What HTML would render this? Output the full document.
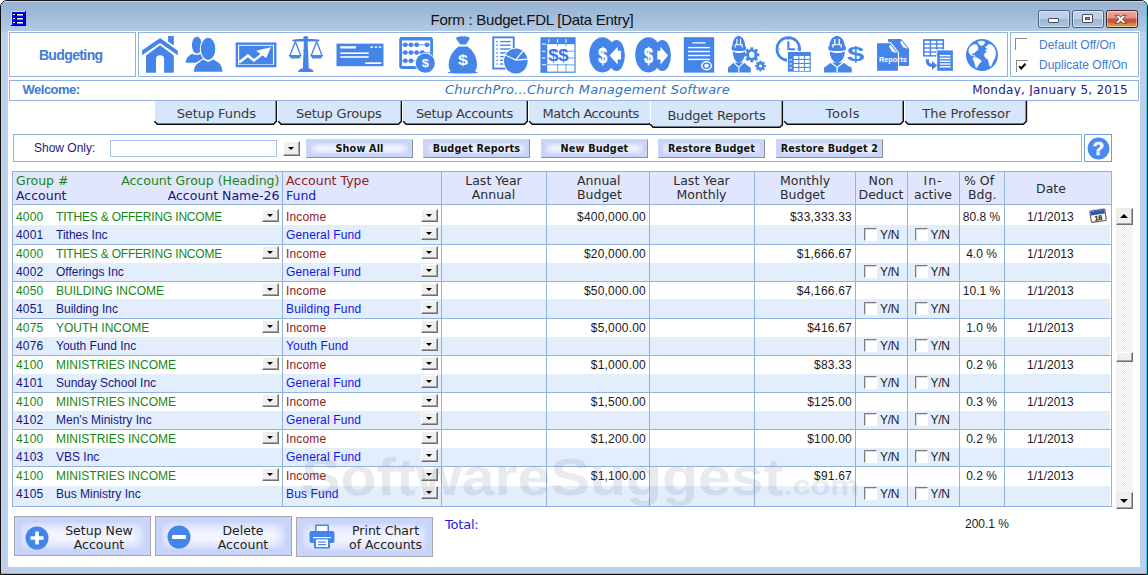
<!DOCTYPE html>
<html lang="en"><head><meta charset="utf-8"><title>Form : Budget.FDL [Data Entry]</title>
<style>
html,body{margin:0;padding:0;background:#fff}
body{width:1148px;height:575px;overflow:hidden;position:relative;font-family:"Liberation Sans",sans-serif;font-size:12px}
.abs{position:absolute}
#win{position:absolute;left:0;top:0;width:1146px;height:573px;border:1px solid #111;border-radius:7px 7px 0 0;background:#bcd0ea;box-shadow:inset -1px -1px 0 #35d6f6;overflow:hidden}
#tbar{position:absolute;left:0;top:0;width:1146px;height:31px;background:linear-gradient(#98b2d3,#9fb9d8 40%,#b3cce6)}
#hl{position:absolute;left:0;top:0;width:1146px;height:1px;background:#c9dbef}
#cy{position:absolute;right:0;top:5px;width:1px;bottom:0;background:#38d4f4}
#title{position:absolute;left:330px;top:10px;width:402px;text-align:center;font-size:15px;letter-spacing:-0.25px;color:#111;white-space:nowrap;line-height:18px}
.wb{position:absolute;top:9px;width:32px;height:18px;box-sizing:border-box;border:1px solid #4d5f7e;border-radius:2.5px;background:linear-gradient(#bfd3ea 0,#bad0e8 48%,#9db8d6 52%,#a9c3e0);box-shadow:inset 0 0 0 1px rgba(255,255,255,.45)}
.wb i{position:absolute;box-sizing:border-box;background:#fff;border:1px solid #4b4b63;border-radius:1px}
.wb b{position:absolute;box-sizing:border-box;background:#8fa9c9;border:1px solid #4b4b63}
.wb.cl{border-color:#4b1d24;background:linear-gradient(#e9a99c 0,#dc9388 45%,#c9503b 50%,#cf5a3e 72%,#c98743 78%,#d29a4c)}
.wb svg{position:absolute;left:-1px;top:-1px}
#content{position:absolute;left:7px;top:30px;width:1132px;height:536px;background:#fff}
#content>*{margin-left:-8px;margin-top:-31px}
.box{position:absolute;box-sizing:border-box;border:1px solid #93b2de;background:#fff}
#budg{position:absolute;left:-1.3px;top:13.7px;width:124px;text-align:center;font-weight:bold;font-size:14px;letter-spacing:-0.62px;color:#427bd2;line-height:16px}
.cb0{position:absolute;width:11px;height:11px;border-left:1px solid #8a8a8a;border-top:1px solid #8a8a8a;background:#fff}
.cb0 svg{position:absolute;left:0;top:0}
.cbt{position:absolute;font-size:12px;line-height:14px;color:#427bd2;white-space:nowrap}
#welc{position:absolute;left:12.5px;top:2px;font-weight:bold;font-size:13px;letter-spacing:-0.5px;line-height:14px;color:#427bd2}
#slogan{position:absolute;left:435px;top:0;letter-spacing:0.19px;font:italic 13px/17px "DejaVu Sans",sans-serif;color:#2f75c5;white-space:nowrap}
#date{position:absolute;right:10px;top:0;height:15px;overflow:hidden;letter-spacing:0.25px;font:12px/18px "DejaVu Sans",sans-serif;color:#1b1b8a;white-space:nowrap}
.tabt{font-family:"DejaVu Sans",sans-serif;font-size:13px;fill:#3a3a3a}
#showonly{position:absolute;left:34px;top:140.7px;font-size:12px;line-height:14px;color:#1b1b7a;white-space:nowrap}
#sinput{position:absolute;left:110px;top:140px;width:165px;height:15px;border:1px solid #a9c4e9;background:#fff}
.dd{position:absolute;box-sizing:border-box;background:#efefef;border:1px solid;border-color:#fff #6e6e6e #6e6e6e #fff;box-shadow:1px 1px 0 #a0a0a0 inset;box-shadow:inset -1px -1px 0 #a5a5a5}
.dd s{position:absolute;left:50%;top:50%;margin:-1.5px 0 0 -3.2px;width:0;height:0;border:3px solid transparent;border-bottom-width:0;border-top-color:#000}
.btn{position:absolute;box-sizing:border-box;border:1px solid;border-color:#cad5fb #8e8e96 #8e8e96 #cad5fb;background:linear-gradient(#c9d4fb 0,#c9d4fb 14%,#dbe2fd 22%,#f4f6ff 50%,#dbe2fd 78%,#c9d4fb 86%,#c9d4fb 100%);text-align:center}
.btn:before{content:"";position:absolute;left:0;top:0;right:0;bottom:0;background:linear-gradient(90deg,#c9d4fb 0,#c9d4fb 3px,rgba(201,212,251,0.55) 5px,rgba(201,212,251,0) 12px,rgba(201,212,251,0) calc(100% - 12px),rgba(201,212,251,0.55) calc(100% - 5px),#c9d4fb calc(100% - 3px),#c9d4fb 100%)}
.btn span{position:relative;top:0.4px;letter-spacing:0.14px;font:bold 9.7px/17px "DejaVu Sans",sans-serif;color:#111;white-space:nowrap}
#tbl{position:absolute;left:12px;top:171px;width:1100px;height:336px;box-sizing:border-box;border:1px solid #93b2de;background:#fff;overflow:hidden}
#tbl>*{margin-left:-1px;margin-top:-1px}
#thead{position:absolute;left:0;top:0;width:1100px;height:34px;box-sizing:border-box;background:#e0e6fc;border-bottom:1px solid #93b2de}
.vl{position:absolute;top:0;width:1px;height:336px;background:#93b2de;z-index:2}
.hl{position:absolute;left:0;width:1100px;height:1px;background:#93b2de}
.rw{position:absolute;left:1px;width:1097px;background:#fff}
.rb{position:absolute;left:1px;width:1097px;background:#e3eefd}
.h{position:absolute;font:12.5px/14px "DejaVu Sans",sans-serif;white-space:nowrap;letter-spacing:0}
.d{position:absolute;font-size:12px;line-height:14px;white-space:nowrap}
.c{text-align:center}
.u{letter-spacing:-0.19px}.l{letter-spacing:0.15px}
.g{color:#168716}.n{color:#161682}.r{color:#8c2222}.b{color:#1414e4}.k{color:#1a1a1a}
.h.k{color:#2b2b2b}
.ck{position:absolute;width:11px;height:11px;background:#fff;border:1px solid;border-color:#7c7c7c #fff #fff #7c7c7c;box-shadow:inset 1px 1px 0 #d8d8d8}
.yn{letter-spacing:-0.3px}.ra{letter-spacing:0.2px}.nm{letter-spacing:0.2px}
#wm{position:absolute;left:288.5px;top:277px;font:bold 51px/60px "Liberation Sans",sans-serif;color:rgba(95,105,135,0.14);white-space:nowrap;transform:scaleX(1.158);transform-origin:0 0;pointer-events:none;z-index:3}
#wm span{font-size:28px}
#strack{position:absolute;left:1116px;top:208px;width:17px;height:301px;background:#f4f4f4;background-image:repeating-conic-gradient(#e9e9e9 0 25%,#fff 0 50%);background-size:2px 2px}
.sb{position:absolute;left:1116px;width:17px;box-sizing:border-box;background:#efefef;border:1px solid;border-color:#e9e9e9 #6e6e6e #6e6e6e #e9e9e9;box-shadow:inset -1px -1px 0 #a5a5a5}
.sb s{position:absolute;left:50%;top:50%;margin:-2px 0 0 -5px;width:0;height:0;border:4px solid transparent;border-bottom-width:0;border-top-color:#000}
.sb s.up{border-top-width:0;border-bottom-width:4px;border-bottom-color:#000;border-top-color:transparent;margin-top:-3px}
.bbtn{position:absolute;box-sizing:border-box;border:1px solid #a6a6ae;background:linear-gradient(#c9d4fb 0,#c9d4fb 12%,#dbe2fd 20%,#f2f4ff 42%,#f2f4ff 58%,#dbe2fd 80%,#c9d4fb 88%,#c9d4fb 100%)}
.bbtn:before{content:"";position:absolute;left:0;top:0;right:0;bottom:0;background:linear-gradient(90deg,#c9d4fb 0,#c9d4fb 5px,rgba(201,212,251,0.55) 8px,rgba(201,212,251,0) 18px,rgba(201,212,251,0) calc(100% - 18px),rgba(201,212,251,0.55) calc(100% - 8px),#c9d4fb calc(100% - 5px),#c9d4fb 100%)}
.bt{position:absolute;top:7px;width:100px;text-align:center;font:12.5px/14px "DejaVu Sans",sans-serif;color:#222;white-space:nowrap}
#total{position:absolute;left:445px;top:516.5px;font:13px/16px "DejaVu Sans",sans-serif;color:#1a1ae0;letter-spacing:-0.2px}
#tot2{position:absolute;left:965px;top:517px;font-size:12px;line-height:15px;color:#1a1a1a}

</style></head>
<body>
<div id="win"><div id="tbar"></div><div id="hl"></div><div id="cy"></div>
<svg class="abs" style="left:10px;top:10px" width="15" height="15" viewBox="0 0 15 15"><rect x="0" y="0" width="14" height="14" fill="#00f"/><path d="M0.5 14V0.5H14" fill="none" stroke="#e8e4c0" stroke-width="1"/><path d="M14.5 0V14.5H0" fill="none" stroke="#000" stroke-width="1"/><g fill="#000"><rect x="5" y="2" width="8" height="3"/><rect x="5" y="6" width="8" height="3"/><rect x="5" y="10" width="8" height="3"/></g><g fill="#fffbe0"><rect x="6" y="3" width="6" height="1.6"/><rect x="6" y="7" width="6" height="1.6"/><rect x="6" y="11" width="6" height="1.6"/><rect x="2" y="3" width="2" height="1"/><rect x="2" y="7" width="2" height="1"/><rect x="2" y="11" width="2" height="1"/></g></svg>
<div id="title">Form : Budget.FDL [Data Entry]</div>
<div class="wb" style="left:1037px"><i style="left:9px;top:7px;width:11px;height:5px"></i></div><div class="wb" style="left:1071px"><i style="left:9px;top:3px;width:11px;height:9px"></i><b style="left:12px;top:6px;width:5px;height:3px"></b></div><div class="wb cl" style="left:1105px"><svg width="31" height="18" viewBox="1 -1 31 18"><path d="M10.2 4.3h3.7l1.8 2.1 1.8-2.1h3.7l-3.6 3.9 3.8 4.1h-3.7l-2-2.3-2 2.3h-3.7l3.8-4.1z" fill="#fff" stroke="#5a2a2a" stroke-width="0.8"/></svg></div>
<div id="content">
<div class="box" style="left:9px;top:32px;width:127px;height:45px"><div id="budg">Budgeting</div></div>
<div class="box" style="left:138px;top:32px;width:870px;height:45px"></div>
<div class="box" style="left:1010px;top:32px;width:129px;height:45px"></div>
<svg class="abs" style="left:8px;top:31px" width="1132" height="48" viewBox="8 31 1132 48" font-family="Liberation Sans, sans-serif">
<g fill="#4585ea" stroke="none">
<!-- 1 house -->
<path d="M142 50.4L160.04 38L177.8 50.8V55.3L160.04 42.9L142 55.3Z"/>
<path d="M168.05 36H173.8V45.5L168.05 41.4Z"/>
<path d="M146 55.4L160.04 45.3L173.8 55.4V72.7H164.1V59.4a4.05 4.05 0 0 0-8.1 0V72.7H146Z"/>
<!-- 2 people -->
<ellipse cx="196.9" cy="45.2" rx="5" ry="8.4"/>
<path d="M185.7 62.85C186.1 58.4 187.7 56 192.5 53.8C194.1 55.3 198.9 55.3 201.3 53.6L203.7 58.4L195.7 62.85Z"/>
<ellipse cx="208.1" cy="48.9" rx="8.3" ry="12.2" fill="#fff"/>
<path d="M192.7 72.6C193.1 67 194.4 64.6 197.4 62.3L202.9 58.3L208.1 60.4L213.3 58.3L219.2 61.9C222 64 223.2 67 223.6 72.6Z" fill="#fff"/>
<ellipse cx="208.1" cy="48.9" rx="7.2" ry="11.1"/>
<path d="M193.85 71.7C194.2 67.2 195.4 65.2 198 63.2L202.9 59.6L208.1 62L213.3 59.6L218.6 62.8C220.9 64.6 222 67.2 222.5 71.7Z"/>
<!-- 3 chart -->
<rect x="236.86" y="43.65" width="38.4" height="22.45" fill="#fff" stroke="#4585ea" stroke-width="2.4"/>
<rect x="239.15" y="45.76" width="33.8" height="18.64"/>
<path d="M239.4 62.3L247.86 55.7L253.95 60.5L263.6 53" fill="none" stroke="#fff" stroke-width="2.5"/>
<path d="M256.1 50.7L270.9 47.2L266.15 58.1Z" fill="#fff"/>
<!-- 4 scale -->
<ellipse cx="305.8" cy="37.8" rx="2.6" ry="1.8"/>
<path d="M293.2 39.5Q305.8 38.2 318.6 39.5Q319.7 39.7 319.5 40.6Q319.3 41.6 318.4 41.6H293.4Q292.5 41.6 292.3 40.6Q292.1 39.7 293.2 39.5Z"/>
<path d="M304 39H307.6L308.8 69H302.8Z"/>
<path d="M297.9 72.1Q298.2 69.2 303 68.2H308.6Q313.3 69.2 313.6 72.1Z"/>
<path d="M295.3 41.6L290.1 55.3M295.3 41.6L300.6 55.3M316.7 41.6L311.4 55.3M316.7 41.6L321.9 55.3" fill="none" stroke="#4585ea" stroke-width="1.35"/>
<path d="M288.4 55H301.9L299.4 58.6H291Z"/>
<path d="M310 55H323.4L320.9 58.6H312.6Z"/>
<!-- 5 cheque -->
<rect x="336.5" y="43.6" width="47" height="22.6"/>
<g fill="#fff"><rect x="340.3" y="46.2" width="15.7" height="2.3"/><rect x="370.4" y="46.4" width="2.6" height="1.4"/><rect x="374.6" y="46.4" width="2.6" height="1.4"/><rect x="378.8" y="46.4" width="2.6" height="1.4"/>
<rect x="340.3" y="52.4" width="28.4" height="1.6"/><rect x="340.3" y="56.2" width="28.4" height="1.6"/><rect x="365.2" y="62.3" width="16.2" height="1.7"/></g>
<!-- 6 abacus -->
<rect x="400.6" y="38.4" width="31" height="29.1" rx="1.8" fill="#fff" stroke="#4585ea" stroke-width="2.8"/>
<rect x="399.8" y="37" width="32.6" height="3.4" rx="1.2"/>
<path d="M402 44.8H430M402 52.6H430M402 60.8H430" fill="none" stroke="#4585ea" stroke-width="0.8"/>
<circle cx="405.3" cy="44.8" r="2.4"/><circle cx="411" cy="44.8" r="2.4"/><circle cx="416.7" cy="44.8" r="2.4"/><circle cx="427" cy="44.8" r="2.4"/>
<circle cx="405.3" cy="52.6" r="2.4"/><circle cx="411" cy="52.6" r="2.4"/><circle cx="416.7" cy="52.6" r="2.4"/><circle cx="422.3" cy="52.6" r="2.4"/>
<circle cx="405.3" cy="60.8" r="2.4"/><circle cx="411" cy="60.8" r="2.4"/>
<circle cx="425.3" cy="63.1" r="10.4" fill="#fff"/><circle cx="425.3" cy="63.1" r="9.6"/>
<text transform="translate(425.3 67.3) scale(1.12 1)" text-anchor="middle" font-weight="bold" font-size="11.5" fill="#fff">$</text>
<!-- 7 money bag -->
<path d="M455.7 38.1Q458.7 35.7 463.1 36.4Q467 35.7 470.05 38.1L466.1 44.4H460.2Z"/>
<path d="M458.7 46.6H467.4C474 51.2 477 58.1 477 65.1C477 68.6 475.7 70.3 474.8 71L478.3 72.9Q463.1 73.9 447.1 72.9L450.9 71C449.6 70.3 448.7 68.6 448.7 65.1C448.7 58.1 452.2 51.2 458.7 46.6Z"/>
<text transform="translate(462.8 65.3) scale(1.18 1)" text-anchor="middle" font-weight="bold" font-size="15" fill="#fff">$</text>
<!-- 8 doc + pie -->
<rect x="493.25" y="37.35" width="20.5" height="31.2" fill="#fff" stroke="#4585ea" stroke-width="1.9"/>
<g><rect x="496.4" y="40.9" width="1.4" height="1.4"/><rect x="500.1" y="40.9" width="10.6" height="1.4"/><rect x="496.4" y="44.5" width="1.4" height="1.4"/><rect x="500.1" y="44.5" width="10.6" height="1.4"/><rect x="496.4" y="48.3" width="1.4" height="1.4"/><rect x="500.1" y="48.3" width="10.6" height="1.4"/><rect x="496.4" y="52.2" width="1.4" height="1.4"/><rect x="500.1" y="52.2" width="6" height="1.4"/><rect x="496.4" y="55.9" width="1.4" height="1.4"/><rect x="500.1" y="55.9" width="4" height="1.4"/><rect x="496.4" y="59.6" width="1.4" height="1.4"/><rect x="500.1" y="59.6" width="3" height="1.4"/><rect x="496.4" y="63.35" width="1.4" height="1.4"/><rect x="500.1" y="63.35" width="3.4" height="1.4"/></g>
<ellipse cx="515.8" cy="61.1" rx="12.7" ry="13.4" fill="#fff"/><ellipse cx="515.8" cy="61.1" rx="11.8" ry="12.5"/>
<path d="M504.6 54.7L515.6 60.05L522.9 51.1M515.6 60.05L527.8 59.2" fill="none" stroke="#fff" stroke-width="1.25"/>
<!-- 9 grid $$ -->
<rect x="540.4" y="37.2" width="35.2" height="35.6"/>
<g fill="#fff"><rect x="548.3" y="39.2" width="1" height="3.4"/><rect x="557.1" y="39.2" width="1" height="3.4"/><rect x="565.5" y="39.2" width="1" height="3.4"/>
<rect x="542" y="43.6" width="4.4" height="1"/><rect x="542" y="50.7" width="3.4" height="1"/><rect x="542" y="57.5" width="3.4" height="1"/><rect x="542" y="64.3" width="4.4" height="1"/>
<rect x="547.2" y="44.2" width="27.2" height="27.4"/></g>
<path d="M557.6 44V71.6M566 44V71.6M547 51.2H574.4M547 58H574.4M547 64.8H574.4" fill="none" stroke="#4585ea" stroke-width="0.9" opacity="0.85"/>
<rect x="548" y="46.4" width="20.2" height="17.6" fill="#fff"/>
<text transform="translate(558.2 61.4) scale(1.16 1)" text-anchor="middle" font-weight="bold" font-size="16" letter-spacing="-0.3" fill="#3a72f0">$$</text>
<!-- 10 $ left -->
<ellipse cx="616.4" cy="55.5" rx="8.5" ry="15.4"/>
<ellipse cx="602.4" cy="54.85" rx="13.2" ry="17.65"/>
<text transform="translate(602.6 62.9) scale(0.92 1.3)" text-anchor="middle" font-weight="bold" font-size="17.5" fill="#fff" stroke="#fff" stroke-width="0.4">$</text>
<path d="M609.6 55.6L617.7 46.8V50.8H620.9V59.6H617.7V64.5Z" fill="#fff"/>
<!-- 11 $ right -->
<ellipse cx="662.4" cy="55.5" rx="8.5" ry="15.4"/>
<ellipse cx="648.4" cy="54.85" rx="13.2" ry="17.65"/>
<text transform="translate(648.5 62.9) scale(0.92 1.3)" text-anchor="middle" font-weight="bold" font-size="17.5" fill="#fff" stroke="#fff" stroke-width="0.4">$</text>
<path d="M668.1 55.6L660.5 46.8V50.8H657.3V59.6H660.5V64.5Z" fill="#fff"/>
<!-- 12 certificate -->
<rect x="683.8" y="37.2" width="30.4" height="35.4"/>
<g fill="#fff"><rect x="692.4" y="42.1" width="13.2" height="1.5" opacity="0.8"/><rect x="688" y="46.9" width="22" height="1.4"/><rect x="688" y="50.8" width="22" height="1.4"/><rect x="688" y="54.8" width="22" height="1.4"/><rect x="688" y="58.7" width="22" height="1.4"/></g>
<ellipse cx="706.56" cy="65.76" rx="5.5" ry="4.7" fill="#fff"/><ellipse cx="706.56" cy="65.76" rx="4" ry="3.3"/><ellipse cx="706.56" cy="65.76" rx="2.3" ry="1.9" fill="#fff"/>
<!-- 13 worker + gears -->
<g>
<path d="M728 72.5V68Q728.3 66.7 729.8 66.2L733.6 62.6H744L748.2 66.2Q750.4 66.7 750.8 68V72.5Z"/>
<path d="M733.2 62L738.8 67.3L744.4 62M738.8 67.3V72.6" fill="none" stroke="#fff" stroke-width="1.1"/>
<path d="M732.8 51.4Q738.9 54.4 745.2 51.4Q745.3 55.5 743.6 59Q741.4 62.6 738.9 63Q736.4 62.6 734.3 59Q732.6 55.5 732.8 51.4Z"/>
<path d="M731.6 46.8L732.4 46Q732.6 41.4 734.2 38.8Q735.8 36.4 738 36Q738.7 34.9 739.4 36Q741.6 36.4 743.2 38.8Q744.8 41.4 745.2 46L746 46.8V49Q745.9 50.2 744.8 50.4Q738.8 51.8 732.8 50.4Q731.7 50.2 731.6 49Z"/>
<path d="M735.3 47.4V44.7H736.9V38.9M742.1 47.4V44.7H740.5V38.9M736.9 44.7H740.5" fill="none" stroke="#fff" stroke-width="1.1"/>
</g>
<g transform="translate(751.8 54.8)"><circle r="5.6"/><rect x="-1.5" y="-7.5" width="3" height="15"/><rect x="-1.5" y="-7.5" width="3" height="15" transform="rotate(45)"/><rect x="-1.5" y="-7.5" width="3" height="15" transform="rotate(90)"/><rect x="-1.5" y="-7.5" width="3" height="15" transform="rotate(135)"/><ellipse rx="2.7" ry="3.2" fill="#fff"/></g>
<g transform="translate(760.5 66)"><circle r="3.9"/><rect x="-1.1" y="-5.4" width="2.2" height="10.8"/><rect x="-1.1" y="-5.4" width="2.2" height="10.8" transform="rotate(45)"/><rect x="-1.1" y="-5.4" width="2.2" height="10.8" transform="rotate(90)"/><rect x="-1.1" y="-5.4" width="2.2" height="10.8" transform="rotate(135)"/><circle r="1.6" fill="#fff"/></g>
<!-- 14 clock + calendar -->
<circle cx="788.3" cy="49" r="11.4" fill="#fff" stroke="#4585ea" stroke-width="2.6"/>
<path d="M788.4 41.2V49.3H795" fill="none" stroke="#4585ea" stroke-width="2.1"/>
<path d="M788.3 38.8V40.2M778.6 49H780.2M796.6 49H798.2" fill="none" stroke="#4585ea" stroke-width="1"/>
<rect x="787" y="51" width="24.8" height="21.7" fill="#fff"/>
<rect x="787.9" y="52" width="22.9" height="19.7"/>
<g fill="#fff"><rect x="793.7" y="56" width="4.6" height="2.9"/><rect x="799.3" y="56" width="4.6" height="2.9"/><rect x="804.9" y="56" width="4.8" height="2.9"/>
<rect x="793.7" y="60" width="4.6" height="2.9"/><rect x="799.3" y="60" width="4.6" height="2.9"/><rect x="804.9" y="60" width="4.8" height="2.9"/>
<rect x="793.7" y="64" width="4.6" height="2.9"/><rect x="799.3" y="64" width="4.6" height="2.9"/><rect x="804.9" y="64" width="4.8" height="2.9"/>
<rect x="793.7" y="68" width="4.6" height="2.9"/><rect x="799.3" y="68" width="4.6" height="2.9"/><rect x="804.9" y="68" width="4.8" height="2.9"/>
<rect x="789.4" y="59.4" width="2.6" height="1"/><rect x="789.4" y="63.4" width="2.6" height="1"/><rect x="789.4" y="67.4" width="2.6" height="1"/></g>
<!-- 15 worker + $ -->
<g transform="translate(837.85 0) scale(1.22 1) translate(-739.4 0)"><path d="M728 72.5V68Q728.3 66.7 729.8 66.2L733.6 62.6H744L748.2 66.2Q750.4 66.7 750.8 68V72.5Z"/>
<path d="M733.2 62L738.8 67.3L744.4 62M738.8 67.3V72.6" fill="none" stroke="#fff" stroke-width="1.1"/>
<path d="M732.8 51.4Q738.9 54.4 745.2 51.4Q745.3 55.5 743.6 59Q741.4 62.6 738.9 63Q736.4 62.6 734.3 59Q732.6 55.5 732.8 51.4Z"/>
<path d="M731.6 46.8L732.4 46Q732.6 41.4 734.2 38.8Q735.8 36.4 738 36Q738.7 34.9 739.4 36Q741.6 36.4 743.2 38.8Q744.8 41.4 745.2 46L746 46.8V49Q745.9 50.2 744.8 50.4Q738.8 51.8 732.8 50.4Q731.7 50.2 731.6 49Z"/>
<path d="M735.3 47.4V44.7H736.9V38.9M742.1 47.4V44.7H740.5V38.9M736.9 44.7H740.5" fill="none" stroke="#fff" stroke-width="1.1"/></g>
<text transform="translate(855.5 61.2) scale(1.55 1)" text-anchor="middle" font-weight="bold" font-size="20" fill="#4585ea">$</text>
<!-- 16 reports -->
<path d="M888.1 39.1H901.2L909 48.6V66.1H888.1Z"/>
<path d="M901.4 40.6L908 48.7L903.4 47.4L900.2 42.6Z" fill="#fff"/>
<path d="M876.1 42.3H891L899 52.4V71.8H876.1Z" fill="#fff"/>
<path d="M877.06 43.3H890.3L897.97 52.9V70.8H877.06Z"/>
<path d="M890.4 44.8L896.8 52.9L892.2 51.7L889 46.8Z" fill="#fff"/>
<text x="878.9" y="61.7" font-weight="bold" font-size="7.4" fill="#fff">Reports</text>
<!-- 17 table + doc -->
<rect x="923.1" y="39.1" width="21" height="17.5"/>
<g fill="#fff"><rect x="924.7" y="40.9" width="5" height="2.4"/><rect x="931.1" y="40.9" width="5" height="2.4"/><rect x="937.5" y="40.9" width="5" height="2.4"/>
<rect x="924.7" y="44.7" width="5" height="2.6"/><rect x="931.1" y="44.7" width="5" height="2.6"/><rect x="937.5" y="44.7" width="5" height="2.6"/>
<rect x="924.7" y="48.7" width="5" height="2.6"/><rect x="931.1" y="48.7" width="5" height="2.6"/><rect x="937.5" y="48.7" width="5" height="2.6"/>
<rect x="924.7" y="52.7" width="5" height="2.4"/><rect x="931.1" y="52.7" width="5" height="2.4"/></g>
<rect x="936.2" y="49.4" width="17.7" height="22.5" fill="#fff"/>
<rect x="937.2" y="50.4" width="15.7" height="20.4"/>
<g fill="#fff"><rect x="939.8" y="54.9" width="10.8" height="1.4"/><rect x="939.8" y="57.7" width="10.8" height="1.4"/><rect x="939.8" y="60.5" width="10.8" height="1.4"/><rect x="939.8" y="63.3" width="10.8" height="1.4"/><rect x="939.8" y="66.1" width="10.8" height="1.4"/></g>
<path d="M927.4 59.2V60.6Q927.4 65.4 932 65.4H933" fill="none" stroke="#4585ea" stroke-width="3.2"/>
<path d="M932 61L937.2 65.5L932 70Z"/>
<!-- 18 globe -->
<circle cx="982" cy="55" r="16"/>
<g transform="translate(960 34) scale(0.0731)" fill="#fff">
<path d="M122 250L120 215L137 180L162 157L195 143L223 143L238 162L247 190L245 213L228 230L210 243L198 260L180 265L165 270L160 282L170 291L190 295L205 299L210 306L190 303L162 296L140 281L127 265Z" stroke="#fff" stroke-width="6" stroke-linejoin="round"/>
<path d="M175 330L195 321L230 325L260 342L285 359L292 372L286 384L266 404L248 428L236 453L225 462L214 456L211 440L207 410L194 376L180 349Z" stroke="#fff" stroke-width="6" stroke-linejoin="round"/>
<path d="M243 110L262 100L300 97L330 103L342 112L336 130L320 146L295 157L277 155L262 139Z" stroke="#fff" stroke-width="6" stroke-linejoin="round"/>
<path d="M400 141L438 153L467 187L484 230L489 270L485 300L477 325L462 355L447 385L432 425L423 442L407 437L401 420L395 390L388 360L374 342L352 327L335 300L333 277L342 261L361 253L384 250L366 240L352 232L348 223L357 214L374 208L383 198L366 195L352 191L348 183L357 170L376 153Z" stroke="#fff" stroke-width="6" stroke-linejoin="round"/>
</g>
</svg>

<div class="cb0" style="left:1015px;top:38px"></div><div class="cbt" style="left:1039px;top:38px">Default Off/On</div>
<div class="cb0" style="left:1016px;top:60px"><svg width="11" height="11" viewBox="0 0 11 11"><path d="M2.2 5.2l2 2.2 4.3-4.6" fill="none" stroke="#000" stroke-width="2"/></svg></div><div class="cbt" style="left:1039px;top:58px">Duplicate Off/On</div>
<div class="box" style="left:9px;top:80px;width:1130px;height:21px"><div id="welc">Welcome:</div><div id="slogan">ChurchPro...Church Management Software</div><div id="date">Monday, January 5, 2015</div></div>
<svg class="abs" style="left:0;top:100px" width="1148" height="30" viewBox="0 100 1148 30">
<path d="M155 101H276.4V121L273.4 124.2H158L155 121Z" fill="#d6e6fb"/><path d="M154.4 121.2L157.4 124.2H273.4L276.4 121.2V101" fill="none" stroke="#0a0a0a" stroke-width="1.5"/><text x="176.70000000000002" y="118" textLength="79.3" class="tabt">Setup Funds</text>
<path d="M278 101H401.4V121L398.4 124.2H281L278 121Z" fill="#d6e6fb"/><path d="M277.5 101V121.5" fill="none" stroke="#fff" stroke-width="1"/><path d="M278.2 121.2L281.2 124.2H398.4L401.4 121.2V101" fill="none" stroke="#0a0a0a" stroke-width="1.5"/><text x="295.90000000000003" y="118" textLength="85.89999999999999" class="tabt">Setup Groups</text>
<path d="M403 101H527.4V121L524.4 124.2H406L403 121Z" fill="#d6e6fb"/><path d="M402.5 101V121.5" fill="none" stroke="#fff" stroke-width="1"/><path d="M403.2 121.2L406.2 124.2H524.4L527.4 121.2V101" fill="none" stroke="#0a0a0a" stroke-width="1.5"/><text x="415.90000000000003" y="118" textLength="97.3" class="tabt">Setup Accounts</text>
<path d="M529 101H652V121L649 124.2H532L529 121Z" fill="#d6e6fb"/><path d="M528.5 101V121.5" fill="none" stroke="#fff" stroke-width="1"/><path d="M529.2 121.2L532.2 124.2H649L652 121.2V101" fill="none" stroke="#0a0a0a" stroke-width="1.5"/><text x="542.5999999999999" y="118" textLength="96.7" class="tabt">Match Accounts</text>
<path d="M784 101H903.3V121L900.3 124.2H787L784 121Z" fill="#d6e6fb"/><path d="M783.5 101V121.5" fill="none" stroke="#fff" stroke-width="1"/><path d="M784.2 121.2L787.2 124.2H900.3L903.3 121.2V101" fill="none" stroke="#0a0a0a" stroke-width="1.5"/><text x="825.8" y="118" textLength="33.8" class="tabt">Tools</text>
<path d="M905 101H1026.4V121L1023.4000000000001 124.2H908L905 121Z" fill="#d6e6fb"/><path d="M904.5 101V121.5" fill="none" stroke="#fff" stroke-width="1"/><path d="M905.2 121.2L908.2 124.2H1023.4000000000001L1026.4 121.2V101" fill="none" stroke="#0a0a0a" stroke-width="1.5"/><text x="922.3" y="118" textLength="88.1" class="tabt">The Professor</text>
<path d="M650 101H782.4V124.5L779.8 127.3H653L650 124.5Z" fill="#d6e6fb"/><path d="M650.5 101V124" fill="none" stroke="#fff" stroke-width="1"/><path d="M650.3 124.3L653 127.3H779.8L782.4 124.7V101" fill="none" stroke="#0a0a0a" stroke-width="1.5"/><text x="667.4" y="120" textLength="98.3" class="tabt">Budget Reports</text>
</svg>
<div class="box" style="left:13px;top:134px;width:1069px;height:28px"></div>
<div id="showonly">Show Only:</div><div id="sinput"></div><div class="dd" style="left:283px;top:141px;width:17px;height:15px"><s></s></div>
<div class="btn" style="left:306px;top:139px;width:107px;height:19px"><span>Show All</span></div><div class="btn" style="left:423px;top:139px;width:107px;height:19px"><span>Budget Reports</span></div><div class="btn" style="left:541px;top:139px;width:107px;height:19px"><span>New Budget</span></div><div class="btn" style="left:658px;top:139px;width:107px;height:19px"><span>Restore Budget</span></div><div class="btn" style="left:776px;top:139px;width:107px;height:19px"><span>Restore Budget 2</span></div>
<div class="box" style="left:1084px;top:134px;width:28px;height:28px;border-color:#6f9fe0"><svg class="abs" style="left:1.5px;top:1.5px" width="23" height="23" viewBox="0 0 23 23"><circle cx="11.5" cy="11.5" r="10.9" fill="#4a8af0"/><text x="11.4" y="18" text-anchor="middle" font-family="Liberation Sans, sans-serif" font-weight="bold" font-size="18.5" fill="#fff" stroke="#fff" stroke-width="0.5">?</text></svg></div>
<div id="tbl">
<div id="thead"></div>
<div class="vl" style="left:270px"></div><div class="vl" style="left:429px"></div><div class="vl" style="left:534px"></div><div class="vl" style="left:637px"></div><div class="vl" style="left:742px"></div><div class="vl" style="left:843px"></div><div class="vl" style="left:895px"></div><div class="vl" style="left:947px"></div><div class="vl" style="left:992px"></div>
<div class="h g" style="left:4px;top:3px">Group #</div><div class="h g" style="right:831.6px;top:3px">Account Group (Heading)</div><div class="h n" style="left:4px;top:17.6px">Account</div><div class="h n" style="right:831.6px;top:17.6px">Account Name-26</div><div class="h r" style="left:274px;top:3px">Account Type</div><div class="h b" style="left:274px;top:17.6px">Fund</div>
<div class="h k c" style="left:429px;width:105px;top:3px">Last Year<br>Annual</div><div class="h k" style="left:565px;top:3px">Annual<br>Budget</div><div class="h k c" style="left:637px;width:105px;top:3px">Last Year<br>Monthly</div><div class="h k" style="left:768px;top:3px">Monthly<br>Budget</div><div class="h k c" style="left:843px;width:52px;top:3px">Non<br>Deduct</div><div class="h k c" style="left:895px;width:52px;top:3px"><span style="letter-spacing:0.9px">In-</span><br>active</div><div class="h k" style="left:952px;top:3px">% Of<br>&nbsp;Bdg.</div><div class="h k c" style="left:993px;width:92px;top:10.7px">Date</div>
<div class="rw" style="top:34px;height:20px"></div><div class="rb" style="top:54px;height:19px"></div><div class="hl" style="top:73px"></div><div class="d g nm" style="left:4px;top:39px">4000</div><div class="d g u" style="left:44px;top:39px">TITHES &amp; OFFERING INCOME</div><div class="d n nm" style="left:4px;top:57px">4001</div><div class="d n" style="left:44px;top:57px">Tithes Inc</div><div class="d r l" style="left:274px;top:39px">Income</div><div class="d b l" style="left:274px;top:57px">General Fund</div><div class="d k ra" style="right:465px;top:39px">$400,000.00</div><div class="d k ra" style="right:259px;top:39px">$33,333.33</div><div class="d k c" style="left:947px;width:45px;top:39px">80.8 %</div><div class="d k" style="left:1015px;top:39px">1/1/2013</div><div class="ck" style="left:852px;top:57px"></div><div class="d k yn" style="left:868px;top:57px">Y/N</div><div class="ck" style="left:903px;top:57px"></div><div class="d k yn" style="left:918.5px;top:57px">Y/N</div><div class="dd" style="left:250px;top:38px;width:17px;height:13px"><s></s></div><div class="dd" style="left:409px;top:38px;width:17px;height:13px"><s></s></div><div class="dd" style="left:409px;top:56px;width:17px;height:13px"><s></s></div>
<div class="rw" style="top:74px;height:18px"></div><div class="rb" style="top:92px;height:18px"></div><div class="hl" style="top:110px"></div><div class="d g nm" style="left:4px;top:76px">4000</div><div class="d g u" style="left:44px;top:76px">TITHES &amp; OFFERING INCOME</div><div class="d n nm" style="left:4px;top:94px">4002</div><div class="d n" style="left:44px;top:94px">Offerings Inc</div><div class="d r l" style="left:274px;top:76px">Income</div><div class="d b l" style="left:274px;top:94px">General Fund</div><div class="d k ra" style="right:465px;top:76px">$20,000.00</div><div class="d k ra" style="right:259px;top:76px">$1,666.67</div><div class="d k c" style="left:947px;width:45px;top:76px">4.0 %</div><div class="d k" style="left:1015px;top:76px">1/1/2013</div><div class="ck" style="left:852px;top:94px"></div><div class="d k yn" style="left:868px;top:94px">Y/N</div><div class="ck" style="left:903px;top:94px"></div><div class="d k yn" style="left:918.5px;top:94px">Y/N</div><div class="dd" style="left:250px;top:75px;width:17px;height:13px"><s></s></div><div class="dd" style="left:409px;top:75px;width:17px;height:13px"><s></s></div><div class="dd" style="left:409px;top:93px;width:17px;height:13px"><s></s></div>
<div class="rw" style="top:111px;height:17px"></div><div class="rb" style="top:128px;height:19px"></div><div class="hl" style="top:147px"></div><div class="d g nm" style="left:4px;top:113px">4050</div><div class="d g" style="left:44px;top:113px">BUILDING INCOME</div><div class="d n nm" style="left:4px;top:131px">4051</div><div class="d n" style="left:44px;top:131px">Building Inc</div><div class="d r l" style="left:274px;top:113px">Income</div><div class="d b l" style="left:274px;top:131px">Building Fund</div><div class="d k ra" style="right:465px;top:113px">$50,000.00</div><div class="d k ra" style="right:259px;top:113px">$4,166.67</div><div class="d k c" style="left:947px;width:45px;top:113px">10.1 %</div><div class="d k" style="left:1015px;top:113px">1/1/2013</div><div class="ck" style="left:852px;top:131px"></div><div class="d k yn" style="left:868px;top:131px">Y/N</div><div class="ck" style="left:903px;top:131px"></div><div class="d k yn" style="left:918.5px;top:131px">Y/N</div><div class="dd" style="left:250px;top:112px;width:17px;height:13px"><s></s></div><div class="dd" style="left:409px;top:112px;width:17px;height:13px"><s></s></div><div class="dd" style="left:409px;top:130px;width:17px;height:13px"><s></s></div>
<div class="rw" style="top:148px;height:18px"></div><div class="rb" style="top:166px;height:18px"></div><div class="hl" style="top:184px"></div><div class="d g nm" style="left:4px;top:150px">4075</div><div class="d g" style="left:44px;top:150px">YOUTH INCOME</div><div class="d n nm" style="left:4px;top:168px">4076</div><div class="d n" style="left:44px;top:168px">Youth Fund Inc</div><div class="d r l" style="left:274px;top:150px">Income</div><div class="d b l" style="left:274px;top:168px">Youth Fund</div><div class="d k ra" style="right:465px;top:150px">$5,000.00</div><div class="d k ra" style="right:259px;top:150px">$416.67</div><div class="d k c" style="left:947px;width:45px;top:150px">1.0 %</div><div class="d k" style="left:1015px;top:150px">1/1/2013</div><div class="ck" style="left:852px;top:168px"></div><div class="d k yn" style="left:868px;top:168px">Y/N</div><div class="ck" style="left:903px;top:168px"></div><div class="d k yn" style="left:918.5px;top:168px">Y/N</div><div class="dd" style="left:250px;top:149px;width:17px;height:13px"><s></s></div><div class="dd" style="left:409px;top:149px;width:17px;height:13px"><s></s></div><div class="dd" style="left:409px;top:167px;width:17px;height:13px"><s></s></div>
<div class="rw" style="top:185px;height:18px"></div><div class="rb" style="top:203px;height:18px"></div><div class="hl" style="top:221px"></div><div class="d g nm" style="left:4px;top:187px">4100</div><div class="d g" style="left:44px;top:187px">MINISTRIES INCOME</div><div class="d n nm" style="left:4px;top:205px">4101</div><div class="d n" style="left:44px;top:205px">Sunday School Inc</div><div class="d r l" style="left:274px;top:187px">Income</div><div class="d b l" style="left:274px;top:205px">General Fund</div><div class="d k ra" style="right:465px;top:187px">$1,000.00</div><div class="d k ra" style="right:259px;top:187px">$83.33</div><div class="d k c" style="left:947px;width:45px;top:187px">0.2 %</div><div class="d k" style="left:1015px;top:187px">1/1/2013</div><div class="ck" style="left:852px;top:205px"></div><div class="d k yn" style="left:868px;top:205px">Y/N</div><div class="ck" style="left:903px;top:205px"></div><div class="d k yn" style="left:918.5px;top:205px">Y/N</div><div class="dd" style="left:250px;top:186px;width:17px;height:13px"><s></s></div><div class="dd" style="left:409px;top:186px;width:17px;height:13px"><s></s></div><div class="dd" style="left:409px;top:204px;width:17px;height:13px"><s></s></div>
<div class="rw" style="top:222px;height:18px"></div><div class="rb" style="top:240px;height:18px"></div><div class="hl" style="top:258px"></div><div class="d g nm" style="left:4px;top:224px">4100</div><div class="d g" style="left:44px;top:224px">MINISTRIES INCOME</div><div class="d n nm" style="left:4px;top:242px">4102</div><div class="d n" style="left:44px;top:242px">Men's Ministry Inc</div><div class="d r l" style="left:274px;top:224px">Income</div><div class="d b l" style="left:274px;top:242px">General Fund</div><div class="d k ra" style="right:465px;top:224px">$1,500.00</div><div class="d k ra" style="right:259px;top:224px">$125.00</div><div class="d k c" style="left:947px;width:45px;top:224px">0.3 %</div><div class="d k" style="left:1015px;top:224px">1/1/2013</div><div class="ck" style="left:852px;top:242px"></div><div class="d k yn" style="left:868px;top:242px">Y/N</div><div class="ck" style="left:903px;top:242px"></div><div class="d k yn" style="left:918.5px;top:242px">Y/N</div><div class="dd" style="left:250px;top:223px;width:17px;height:13px"><s></s></div><div class="dd" style="left:409px;top:223px;width:17px;height:13px"><s></s></div><div class="dd" style="left:409px;top:241px;width:17px;height:13px"><s></s></div>
<div class="rw" style="top:259px;height:18px"></div><div class="rb" style="top:277px;height:18px"></div><div class="hl" style="top:295px"></div><div class="d g nm" style="left:4px;top:261px">4100</div><div class="d g" style="left:44px;top:261px">MINISTRIES INCOME</div><div class="d n nm" style="left:4px;top:279px">4103</div><div class="d n" style="left:44px;top:279px">VBS Inc</div><div class="d r l" style="left:274px;top:261px">Income</div><div class="d b l" style="left:274px;top:279px">General Fund</div><div class="d k ra" style="right:465px;top:261px">$1,200.00</div><div class="d k ra" style="right:259px;top:261px">$100.00</div><div class="d k c" style="left:947px;width:45px;top:261px">0.2 %</div><div class="d k" style="left:1015px;top:261px">1/1/2013</div><div class="ck" style="left:852px;top:279px"></div><div class="d k yn" style="left:868px;top:279px">Y/N</div><div class="ck" style="left:903px;top:279px"></div><div class="d k yn" style="left:918.5px;top:279px">Y/N</div><div class="dd" style="left:250px;top:260px;width:17px;height:13px"><s></s></div><div class="dd" style="left:409px;top:260px;width:17px;height:13px"><s></s></div><div class="dd" style="left:409px;top:278px;width:17px;height:13px"><s></s></div>
<div class="rw" style="top:296px;height:19px"></div><div class="rb" style="top:315px;height:20px"></div><div class="d g nm" style="left:4px;top:298px">4100</div><div class="d g" style="left:44px;top:298px">MINISTRIES INCOME</div><div class="d n nm" style="left:4px;top:316px">4105</div><div class="d n" style="left:44px;top:316px">Bus Ministry Inc</div><div class="d r l" style="left:274px;top:298px">Income</div><div class="d b l" style="left:274px;top:316px">Bus Fund</div><div class="d k ra" style="right:465px;top:298px">$1,100.00</div><div class="d k ra" style="right:259px;top:298px">$91.67</div><div class="d k c" style="left:947px;width:45px;top:298px">0.2 %</div><div class="d k" style="left:1015px;top:298px">1/1/2013</div><div class="ck" style="left:852px;top:316px"></div><div class="d k yn" style="left:868px;top:316px">Y/N</div><div class="ck" style="left:903px;top:316px"></div><div class="d k yn" style="left:918.5px;top:316px">Y/N</div><div class="dd" style="left:250px;top:297px;width:17px;height:13px"><s></s></div><div class="dd" style="left:409px;top:297px;width:17px;height:13px"><s></s></div><div class="dd" style="left:409px;top:315px;width:17px;height:13px"><s></s></div>
<svg class="abs" style="left:1077px;top:37px" width="18" height="15" viewBox="0 0 18 15"><g transform="rotate(-8 9 7)"><rect x="1.5" y="2" width="15" height="11.5" rx="1" fill="#fff" stroke="#5c5c5c" stroke-width="1.1"/><rect x="2" y="2.5" width="14" height="4" fill="#2a55c8"/><text x="9" y="12.2" text-anchor="middle" font-family="Liberation Sans, sans-serif" font-weight="bold" font-size="6.8" fill="#1c1c1c" stroke="#1c1c1c" stroke-width="0.25">18</text><rect x="4.5" y="0.5" width="1" height="3" fill="#999"/><rect x="12" y="0.5" width="1" height="3" fill="#999"/></g></svg>
<div id="wm">SoftwareSuggest<span>.com</span></div>
</div>
<div id="strack"></div><div class="sb" style="top:208px;height:17px"><s class="up"></s></div><div class="sb" style="top:352px;height:10px;border-top-color:#fff;border-left-color:#fff"></div><div class="sb" style="top:492px;height:17px"><s></s></div>
<div class="bbtn" style="left:14px;top:516px;width:137px;height:40px"><div class="bt" style="left:34.0px;top:7px">Setup New<br>Account</div><svg class="abs" style="left:10px;top:9px" width="24" height="24" viewBox="0 0 24 24"><circle cx="12" cy="12" r="11.5" fill="#4585ea"/><path d="M10.2 5.5h3.6v4.7h4.7v3.6h-4.7v4.7h-3.6v-4.7H5.5v-3.6h4.7z" fill="#fff"/></svg></div>
<div class="bbtn" style="left:155px;top:516px;width:137px;height:40px"><div class="bt" style="left:37.0px;top:7px">Delete<br>Account</div><svg class="abs" style="left:11px;top:8px" width="24" height="24" viewBox="0 0 24 24"><circle cx="12" cy="12" r="11.5" fill="#4585ea"/><rect x="5" y="10" width="14" height="4" rx="1" fill="#fff"/></svg></div>
<div class="bbtn" style="left:296px;top:517px;width:137px;height:40px"><div class="bt" style="left:38.5px;top:6px">Print Chart<br>of Accounts</div><svg class="abs" style="left:12px;top:5.5px" width="26" height="25" viewBox="0 0 26 25"><g fill="#4585ea"><rect x="6" y="0.5" width="14" height="8" rx="1"/><rect x="0.5" y="7" width="25" height="12" rx="2"/><rect x="5" y="14" width="16" height="10.5" rx="1"/></g><rect x="7.5" y="2" width="11" height="5" fill="#fff"/><rect x="7" y="15.5" width="12" height="7.5" fill="#fff"/><rect x="9" y="17.5" width="8" height="1.2" fill="#4585ea"/><rect x="9" y="20" width="8" height="1.2" fill="#4585ea"/><rect x="4" y="13" width="18" height="1.2" fill="#fff"/></svg></div>
<div id="total">Total:</div><div id="tot2">200.1 %</div>
</div></div>
</body></html>
